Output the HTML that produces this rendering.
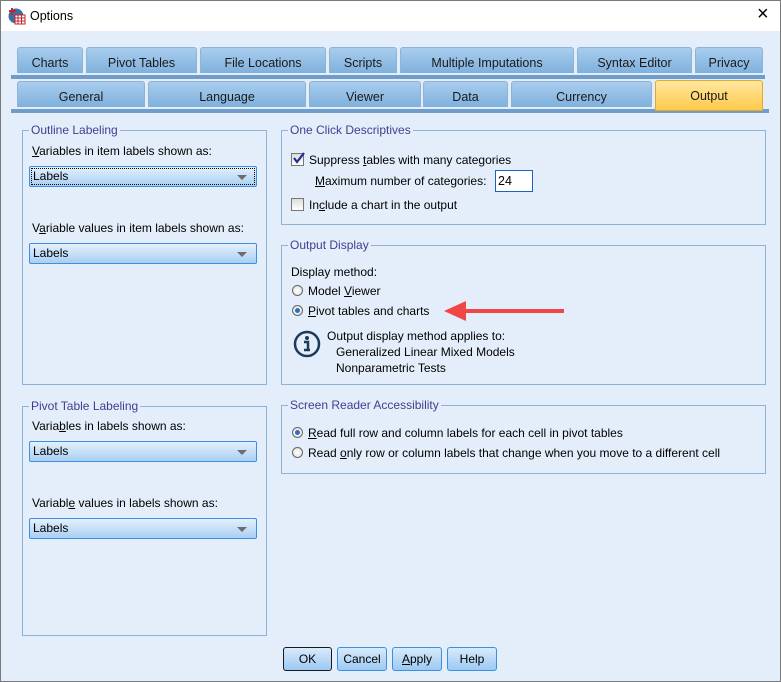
<!DOCTYPE html>
<html><head><style>
body{margin:0;width:781px;height:682px;overflow:hidden;font-family:"Liberation Sans",sans-serif;font-size:12px;color:#000;}
#win{position:absolute;left:0;top:0;width:781px;height:682px;background:#e3eefa;box-shadow:inset 0 0 0 1px #7a7a7a;}
#title{position:absolute;left:1px;top:1px;width:779px;height:30px;background:#fff;}
.a{position:absolute;white-space:nowrap;}
.tab{position:absolute;height:26px;border:1px solid #8fb3d6;border-bottom:none;border-radius:3px 3px 0 0;background:linear-gradient(#a9cdee,#7fb0dd);text-align:center;line-height:30px;font-size:12.5px;color:#1a1a1a;box-sizing:border-box;}
.bar{position:absolute;height:4px;background:#6e9dcc;}
.grp{position:absolute;border:1px solid #8db2d9;box-sizing:border-box;}
.gt{position:absolute;top:-8px;left:6px;background:#e3eefa;padding:0 2px;color:#3f3f8f;font-size:12px;}
.dd{position:absolute;width:228px;height:21px;border:1px solid #3d8fe0;border-radius:2px;background:linear-gradient(#e4f0fc,#a8cff3);box-sizing:border-box;padding-left:3px;line-height:19px;font-size:12px;}
.dd:after{content:"";position:absolute;right:9px;top:8px;border-left:5px solid transparent;border-right:5px solid transparent;border-top:5px solid #6d6d6d;}
.rb{position:absolute;width:11px;height:11px;border-radius:50%;border:1px solid #666;background:radial-gradient(#fff,#ddd);box-sizing:border-box;}
.rb.on:after{content:"";position:absolute;left:2px;top:2px;width:5px;height:5px;border-radius:50%;background:#2a6fc9;}
.cb{position:absolute;width:13px;height:13px;border:1px solid #777;background:linear-gradient(#ddd,#fff);box-sizing:border-box;}
.btn{position:absolute;top:647px;height:24px;border:1px solid #3d8fe0;border-radius:3px;background:linear-gradient(#d8eafc,#9cc9f2);box-sizing:border-box;text-align:center;line-height:22px;font-size:12px;}
u{text-decoration:underline;}
</style></head><body>
<div id="win">
<div id="title">
<svg class="a" style="left:7px;top:6px" width="18" height="18" viewBox="0 0 18 18"><circle cx="8" cy="9" r="7.5" fill="#3b6fa8"/><rect x="7" y="8" width="10" height="9" fill="#fff" stroke="#c2262e"/><path d="M7 11h10M7 14h10M10 8v9M13.5 8v9" stroke="#c2262e"/><path d="M4 1v7M1 4h7" stroke="#c2262e" stroke-width="2"/></svg>
<div class="a" style="left:29px;top:8px;font-size:12.5px">Options</div>
<div class="a" style="left:756px;top:2px;font-size:20px;font-weight:300">×</div>
</div>
<div class="tab" style="left:17px;top:47px;width:66px">Charts</div>
<div class="tab" style="left:86px;top:47px;width:111px">Pivot Tables</div>
<div class="tab" style="left:200px;top:47px;width:126px">File Locations</div>
<div class="tab" style="left:329px;top:47px;width:68px">Scripts</div>
<div class="tab" style="left:400px;top:47px;width:174px">Multiple Imputations</div>
<div class="tab" style="left:577px;top:47px;width:115px">Syntax Editor</div>
<div class="tab" style="left:695px;top:47px;width:68px">Privacy</div>
<div class="bar" style="left:11px;top:75px;width:754px"></div>
<div class="tab" style="left:17px;top:81px;width:128px">General</div>
<div class="tab" style="left:148px;top:81px;width:158px">Language</div>
<div class="tab" style="left:309px;top:81px;width:112px">Viewer</div>
<div class="tab" style="left:423px;top:81px;width:85px">Data</div>
<div class="tab" style="left:511px;top:81px;width:141px">Currency</div>
<div class="bar" style="left:11px;top:109px;width:758px"></div>
<div class="tab" style="left:655px;top:80px;width:108px;height:31px;background:linear-gradient(#ffe7a0,#ffc94a);border:1px solid #e3a92a;line-height:30px">Output</div>

<div class="grp" style="left:22px;top:130px;width:245px;height:255px"><div class="gt">Outline Labeling</div></div>
<div class="a" style="left:32px;top:144px"><u>V</u>ariables in item labels shown as:</div>
<div class="dd" style="left:29px;top:166px;outline:1px dotted #000;outline-offset:-3px">Labels</div>
<div class="a" style="left:32px;top:221px">V<u>a</u>riable values in item labels shown as:</div>
<div class="dd" style="left:29px;top:243px">Labels</div>

<div class="grp" style="left:22px;top:406px;width:245px;height:230px"><div class="gt">Pivot Table Labeling</div></div>
<div class="a" style="left:32px;top:419px">Varia<u>b</u>les in labels shown as:</div>
<div class="dd" style="left:29px;top:441px">Labels</div>
<div class="a" style="left:32px;top:496px">Variabl<u>e</u> values in labels shown as:</div>
<div class="dd" style="left:29px;top:518px">Labels</div>

<div class="grp" style="left:281px;top:130px;width:485px;height:95px"><div class="gt">One Click Descriptives</div></div>
<div class="cb" style="left:291px;top:153px"></div>
<svg class="a" style="left:292px;top:152px" width="13" height="13"><path d="M2 6l3 4 7-9" stroke="#1c2f8f" stroke-width="2.2" fill="none"/></svg>
<div class="a" style="left:309px;top:153px">Suppress <u>t</u>ables with many categories</div>
<div class="a" style="left:315px;top:174px"><u>M</u>aximum number of categories:</div>
<div class="a" style="left:495px;top:170px;width:38px;height:22px;border:1px solid #1f5fbf;background:#fff;box-sizing:border-box;padding:3px 2px;font-size:12.5px">24</div>
<div class="cb" style="left:291px;top:198px"></div>
<div class="a" style="left:309px;top:198px">In<u>c</u>lude a chart in the output</div>

<div class="grp" style="left:281px;top:245px;width:485px;height:140px"><div class="gt">Output Display</div></div>
<div class="a" style="left:291px;top:265px">Display method:</div>
<div class="rb" style="left:292px;top:285px"></div>
<div class="a" style="left:308px;top:284px">Model <u>V</u>iewer</div>
<div class="rb on" style="left:292px;top:305px"></div>
<div class="a" style="left:308px;top:304px"><u>P</u>ivot tables and charts</div>
<svg class="a" style="left:444px;top:300px" width="122" height="22"><path d="M120 11H18" stroke="#f04646" stroke-width="4"/><path d="M0 11L22 1v20z" fill="#f04646"/></svg>
<svg class="a" style="left:293px;top:330px" width="30" height="30"><circle cx="14" cy="14" r="12" fill="none" stroke="#1c3a5a" stroke-width="2.5"/><circle cx="14" cy="8" r="2" fill="#1c3a5a"/><path d="M11 12h4v8M11 20h6" stroke="#1c3a5a" stroke-width="2.5" fill="none"/></svg>
<div class="a" style="left:327px;top:329px">Output display method applies to:</div>
<div class="a" style="left:336px;top:345px">Generalized Linear Mixed Models</div>
<div class="a" style="left:336px;top:361px">Nonparametric Tests</div>

<div class="grp" style="left:281px;top:405px;width:485px;height:69px"><div class="gt">Screen Reader Accessibility</div></div>
<div class="rb on" style="left:292px;top:427px"></div>
<div class="a" style="left:308px;top:426px"><u>R</u>ead full row and column labels for each cell in pivot tables</div>
<div class="rb" style="left:292px;top:447px"></div>
<div class="a" style="left:308px;top:446px">Read <u>o</u>nly row or column labels that change when you move to a different cell</div>

<div class="btn" style="left:283px;width:49px;border:1px solid #1a1a1a">OK</div>
<div class="btn" style="left:337px;width:50px">Cancel</div>
<div class="btn" style="left:392px;width:50px"><u>A</u>pply</div>
<div class="btn" style="left:447px;width:50px">Help</div>
</div>
</body></html>
